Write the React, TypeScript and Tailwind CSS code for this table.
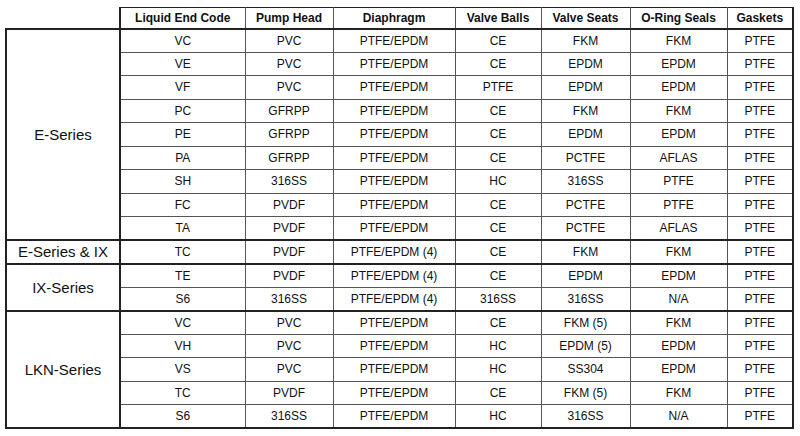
const headers = [
  "Liquid End Code",
  "Pump Head",
  "Diaphragm",
  "Valve Balls",
  "Valve Seats",
  "O-Ring Seals",
  "Gaskets",
];

const widths = [114, 125, 88, 122, 86, 89, 97, 66];

const groups: { name: string; rows: string[][] }[] = [
  {
    name: "E-Series",
    rows: [
      ["VC", "PVC", "PTFE/EPDM", "CE", "FKM", "FKM", "PTFE"],
      ["VE", "PVC", "PTFE/EPDM", "CE", "EPDM", "EPDM", "PTFE"],
      ["VF", "PVC", "PTFE/EPDM", "PTFE", "EPDM", "EPDM", "PTFE"],
      ["PC", "GFRPP", "PTFE/EPDM", "CE", "FKM", "FKM", "PTFE"],
      ["PE", "GFRPP", "PTFE/EPDM", "CE", "EPDM", "EPDM", "PTFE"],
      ["PA", "GFRPP", "PTFE/EPDM", "CE", "PCTFE", "AFLAS", "PTFE"],
      ["SH", "316SS", "PTFE/EPDM", "HC", "316SS", "PTFE", "PTFE"],
      ["FC", "PVDF", "PTFE/EPDM", "CE", "PCTFE", "PTFE", "PTFE"],
      ["TA", "PVDF", "PTFE/EPDM", "CE", "PCTFE", "AFLAS", "PTFE"],
    ],
  },
  {
    name: "E-Series & IX",
    rows: [["TC", "PVDF", "PTFE/EPDM (4)", "CE", "FKM", "FKM", "PTFE"]],
  },
  {
    name: "IX-Series",
    rows: [
      ["TE", "PVDF", "PTFE/EPDM (4)", "CE", "EPDM", "EPDM", "PTFE"],
      ["S6", "316SS", "PTFE/EPDM (4)", "316SS", "316SS", "N/A", "PTFE"],
    ],
  },
  {
    name: "LKN-Series",
    rows: [
      ["VC", "PVC", "PTFE/EPDM", "CE", "FKM (5)", "FKM", "PTFE"],
      ["VH", "PVC", "PTFE/EPDM", "HC", "EPDM (5)", "EPDM", "PTFE"],
      ["VS", "PVC", "PTFE/EPDM", "HC", "SS304", "EPDM", "PTFE"],
      ["TC", "PVDF", "PTFE/EPDM", "CE", "FKM (5)", "FKM", "PTFE"],
      ["S6", "316SS", "PTFE/EPDM", "HC", "316SS", "N/A", "PTFE"],
    ],
  },
];

export default function App() {
  return (
    <div
      className="h-[436px] w-[800px] bg-white pl-[5px] pt-[7px] text-[#111]"
      style={{ fontFamily: '"Liberation Sans", Arial, sans-serif' }}
    >
      <table className="w-[787px] table-fixed border-collapse text-center text-[12px]">
        <colgroup>
          {widths.map((w, i) => (
            <col key={i} style={{ width: w }} />
          ))}
        </colgroup>
        <thead>
          <tr className="h-[21px]">
            <th className="border-0 p-0" />
            {headers.map((h, i) => (
              <th
                key={h}
                className={
                  "border border-t-[#222] border-b-2 border-b-[#222] border-x-[#555] p-0 font-bold leading-none " +
                  (i === 0 ? "border-l-2 border-l-[#222] " : "") +
                  (i === headers.length - 1 ? "border-r-2 border-r-[#222]" : "")
                }
              >
                {h}
              </th>
            ))}
          </tr>
        </thead>
        <tbody>
          {groups.map((g, gi) =>
            g.rows.map((row, ri) => (
              <tr key={g.name + ri} className="h-[23.5px]">
                {ri === 0 && (
                  <td
                    rowSpan={g.rows.length}
                    className="border-2 border-[#222] p-0 text-[15px] leading-none"
                  >
                    {g.name}
                  </td>
                )}
                {row.map((cell, ci) => (
                  <td
                    key={ci}
                    className={
                      "border border-[#555] p-0 leading-none " +
                      (ri === 0 ? "border-t-2 border-t-[#222] " : "") +
                      (gi === groups.length - 1 && ri === g.rows.length - 1
                        ? "border-b-2 border-b-[#222] "
                        : "") +
                      (ci === 0 ? "border-l-2 border-l-[#222] " : "") +
                      (ci === row.length - 1 ? "border-r-2 border-r-[#222]" : "")
                    }
                  >
                    {cell}
                  </td>
                ))}
              </tr>
            ))
          )}
        </tbody>
      </table>
    </div>
  );
}
